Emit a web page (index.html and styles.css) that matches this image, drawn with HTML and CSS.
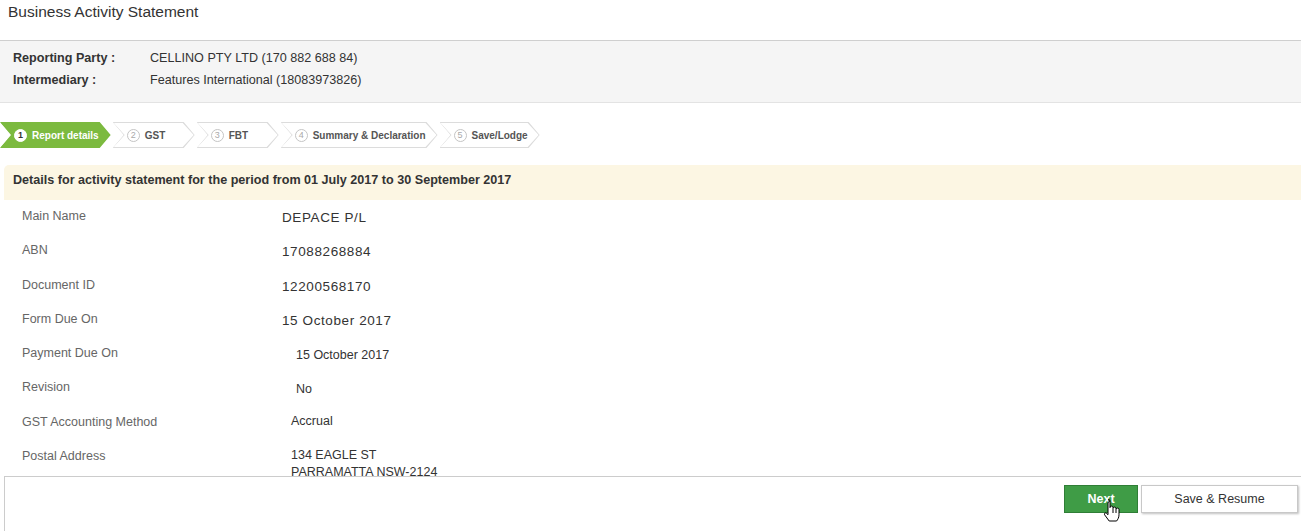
FILE: index.html
```html
<!DOCTYPE html>
<html lang="en">
<head>
<meta charset="UTF-8">
<title>Business Activity Statement</title>
<link rel="stylesheet" href="styles.css">
</head>
<body>

<div class="pagetitle">Business Activity Statement</div>

<div class="party">
  <div class="partyrow"><span class="partylabel">Reporting Party :</span><span>CELLINO PTY LTD (170 882 688 84)</span></div>
  <div class="partyrow"><span class="partylabel">Intermediary :</span><span>Features International (18083973826)</span></div>
</div>

<div class="steps">
  <div class="step active"><div class="stepin"><span class="num">1</span>Report details</div></div>
  <div class="step short"><div class="stepin"><span class="num">2</span>GST</div></div>
  <div class="step short"><div class="stepin"><span class="num">3</span>FBT</div></div>
  <div class="step"><div class="stepin"><span class="num">4</span>Summary &amp; Declaration</div></div>
  <div class="step"><div class="stepin"><span class="num">5</span>Save/Lodge</div></div>
</div>

<div class="main">
  <div class="banner">Details for activity statement for the period from 01 July 2017 to 30 September 2017</div>

  <div class="details">
    <div class="row"><div class="label">Main Name</div><div class="val wide">DEPACE P/L</div></div>
    <div class="row"><div class="label">ABN</div><div class="val wide">17088268884</div></div>
    <div class="row"><div class="label">Document ID</div><div class="val wide">12200568170</div></div>
    <div class="row"><div class="label">Form Due On</div><div class="val wide">15 October 2017</div></div>
    <div class="row"><div class="label">Payment Due On</div><div class="val in2">15 October 2017</div></div>
    <div class="row"><div class="label">Revision</div><div class="val in2">No</div></div>
    <div class="row"><div class="label">GST Accounting Method</div><div class="val in1 up">Accrual</div></div>
    <div class="row"><div class="label">Postal Address</div><div class="val in1 addr">134 EAGLE ST<br>PARRAMATTA NSW-2124</div></div>
  </div>

  <div class="footer">
    <button class="btn next">Next
      <svg class="cursor" width="18" height="23" viewBox="0 0 18 23">
        <path d="M6.5 0.5a1.5 1.5 0 0 1 1.5 1.5v6.6a1.5 1.5 0 0 1 3 0v1a1.5 1.5 0 0 1 3 0v1a1.5 1.5 0 0 1 3 0v5.2c0 3-1.4 4.8-2.4 6.2h-7.4l-4.6-6.2c-0.8-1.1 0.6-2.5 1.7-1.6l1.7 1.5v-11.7a1.5 1.5 0 0 1 1.5-1.5z" fill="#fff" stroke="#000" stroke-width="1"/>
        <path d="M11 10v4M14 11v3" stroke="#000" stroke-width="1" fill="none"/>
      </svg>
    </button>
    <button class="btn save">Save &amp; Resume</button>
  </div>
</div>

</body>
</html>
```

FILE: styles.css
```css
body{
  margin:0;
  font-family:"Liberation Sans", Arial, sans-serif;
  color:#333;
  background:#fff;
}

.pagetitle{
  font-size:15.5px;
  padding:3px 8px 0 8px;
  height:37px;
  line-height:18px;
}

/* gray strip with party info */
.party{
  background:#f5f5f5;
  border-top:1px solid #cfcfcf;
  border-bottom:1px solid #e3e3e3;
  padding:6px 13px 11px 13px;
  font-size:12.6px;
}
.partyrow{
  display:flex;
  line-height:22px;
}
.partylabel{
  width:137px;
  font-weight:bold;
}

/* wizard steps */
.steps{
  display:flex;
  gap:2px;
  margin-top:19px;
  height:26px;
}
.step{
  background:#dcdcdc;
  padding:1px;
  height:24px;
  clip-path:polygon(0 0, calc(100% - 11px) 0, 100% 50%, calc(100% - 11px) 100%, 0 100%, 11px 50%);
}
.stepin{
  height:100%;
  display:flex;
  align-items:center;
  box-sizing:border-box;
  padding:0 11px 0 13px;
  background:#fff;
  font-size:10px;
  font-weight:bold;
  color:#555;
  clip-path:polygon(0 0, calc(100% - 11px) 0, 100% 50%, calc(100% - 11px) 100%, 0 100%, 11px 50%);
}
.step.short .stepin{
  min-width:80px;
}
.num{
  width:11px;
  height:11px;
  border:1px solid #c4c4c4;
  border-radius:50%;
  font-size:9px;
  font-weight:normal;
  color:#aaa;
  display:flex;
  align-items:center;
  justify-content:center;
  margin-right:5px;
}
.step.active{
  background:#7cba3f;
}
.step.active .stepin{
  background:#7cba3f;
  color:#fff;
}
.step.active .num{
  background:#fff;
  border-color:#fff;
  color:#333;
  font-weight:bold;
}

/* main area */
.main{
  margin-top:17px;
  margin-left:4px;
}
.banner{
  background:#fcf6e3;
  border-top-left-radius:5px;
  font-size:12.6px;
  font-weight:bold;
  padding:0 9px;
  height:35px;
  line-height:31px;
}
.details{
  height:276px;
  overflow:hidden;
}
.row{
  display:grid;
  grid-template-columns:260px 1fr;
  height:34.3px;
  padding:9px 0 0 18px;
  box-sizing:border-box;
}
.label{
  font-size:12.5px;
  color:#666;
  line-height:15px;
}
.val{
  font-size:12.5px;
  color:#333;
  line-height:15px;
  margin-top:1px;
}
.val.wide{
  font-size:13.5px;
  letter-spacing:0.6px;
  margin-top:1px;
}
.val.in2{
  padding-left:14px;
  margin-top:2px;
}
.val.in1{
  padding-left:9px;
}
.val.up{
  margin-top:-1px;
}
.val.addr{
  margin-top:-2px;
  line-height:17px;
}

.footer{
  border-top:1px solid #ccc;
  border-left:1px solid #ccc;
  height:60px;
  display:flex;
  justify-content:flex-end;
  align-items:flex-start;
  padding:8px 3px 0 0;
  gap:3px;
}
.btn{
  font-family:"Liberation Sans", Arial, sans-serif;
  font-size:12.5px;
  height:28px;
  cursor:pointer;
}
.next{
  position:relative;
  width:74px;
  background:#3f9c46;
  border:1px solid #2f7e36;
  color:#fff;
  font-weight:bold;
}
.save{
  width:157px;
  background:#fff;
  border:1px solid #c8c8c8;
  color:#333;
  box-shadow:1px 1px 2px rgba(0,0,0,0.25);
}
.cursor{
  position:absolute;
  left:37px;
  top:13px;
}
```
